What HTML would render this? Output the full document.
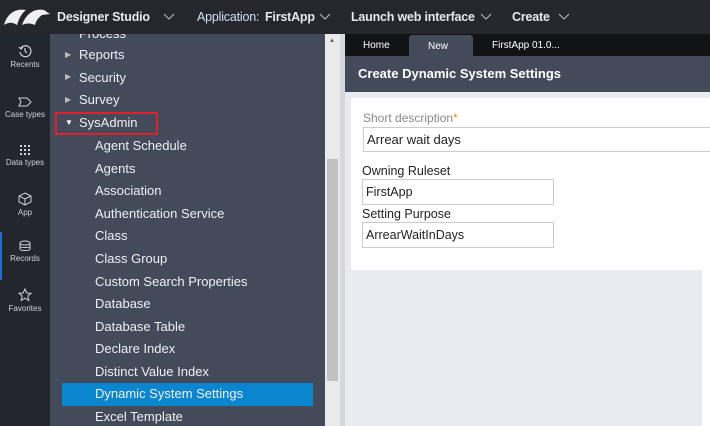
<!DOCTYPE html>
<html><head><style>
*{margin:0;padding:0;box-sizing:border-box}
body{width:710px;height:426px;overflow:hidden;font-family:"Liberation Sans",sans-serif;background:#fff;position:relative}
.top{position:absolute;left:0;top:0;width:710px;height:34px;background:#25272d;color:#e6e8ec;font-size:12.5px;letter-spacing:-0.2px}
.top span{position:absolute;top:10px;font-weight:bold;white-space:nowrap}
.rail{position:absolute;left:0;top:34px;width:50px;height:392px;background:#23262c;color:#cfd3da;font-size:8px;text-align:center}
.rail div{position:absolute;left:0;width:50px}
.rail svg{display:block;margin:0 auto 2px}
.tree{position:absolute;left:50px;top:34px;width:275px;height:392px;background:#434b5a;color:#eef0f3;font-size:13px;overflow:hidden}
.tree div{position:absolute;white-space:nowrap}
.sb{position:absolute;left:325px;top:34px;width:15px;height:392px;background:#eaeaea}
.thumb{position:absolute;left:327px;top:159px;width:11px;height:222px;background:#c1c1c1}
.right{position:absolute;left:340px;top:34px;width:370px;height:392px;background:#e8ebef}
</style></head><body>
<div class="top">
<svg style="position:absolute;left:3px;top:5px" width="48" height="22" viewBox="0 0 48 22"><path d="M1 20 C4 9 12 3 23 5 C19 8 16 13 14 20 C10 17 5 17 1 20 Z M19 20 C23 9 31 3 41 5 L47 9 L39 10 C35 13 33 16 32 20 C28 18 23 18 19 20 Z" fill="#f0f0f0"/></svg>
<span style="left:57px">Designer Studio</span>
<svg style="position:absolute;left:163px;top:13px" width="12" height="8"><path d="M1 1 L6 6 L11 1" stroke="#bbb" fill="none"/></svg>
<span style="left:197px;font-weight:normal;color:#cfe0f5">Application:</span>
<span style="left:265px">FirstApp</span>
<svg style="position:absolute;left:319px;top:13px" width="12" height="8"><path d="M1 1 L6 6 L11 1" stroke="#bbb" fill="none"/></svg>
<span style="left:351px">Launch web interface</span>
<svg style="position:absolute;left:480px;top:13px" width="12" height="8"><path d="M1 1 L6 6 L11 1" stroke="#bbb" fill="none"/></svg>
<span style="left:512px">Create</span>
<svg style="position:absolute;left:558px;top:13px" width="12" height="8"><path d="M1 1 L6 6 L11 1" stroke="#bbb" fill="none"/></svg>
</div>
<div class="rail">
<div style="top:10px"><svg width="14" height="14" viewBox="0 0 14 14"><path d="M3 4 A5.5 5.5 0 1 1 2 8 M1 3 L3 5 L5 3 M7 4 V7 L9 9" stroke="#cfd3da" fill="none" stroke-width="1.2"/></svg>Recents</div>
<div style="top:62px"><svg width="14" height="12" viewBox="0 0 14 12"><path d="M1 2 H9 L13 6 L9 10 H1 L3 6 Z" stroke="#cfd3da" fill="none"/></svg>Case types</div>
<div style="top:110px"><svg width="12" height="12" viewBox="0 0 12 12" fill="#cfd3da"><rect x="1" y="1" width="2" height="2"/><rect x="5" y="1" width="2" height="2"/><rect x="9" y="1" width="2" height="2"/><rect x="1" y="5" width="2" height="2"/><rect x="5" y="5" width="2" height="2"/><rect x="9" y="5" width="2" height="2"/><rect x="1" y="9" width="2" height="2"/><rect x="5" y="9" width="2" height="2"/><rect x="9" y="9" width="2" height="2"/></svg>Data types</div>
<div style="top:158px"><svg width="14" height="14" viewBox="0 0 14 14"><path d="M7 1 L13 4 V10 L7 13 L1 10 V4 Z M1 4 L7 7 L13 4 M7 7 V13" stroke="#cfd3da" fill="none"/></svg>App</div>
<div style="top:198px;left:0;width:2px;height:48px;background:#1f6fd6"></div>
<div style="top:206px"><svg width="14" height="12" viewBox="0 0 14 12"><ellipse cx="7" cy="3" rx="5" ry="2" stroke="#cfd3da" fill="none"/><path d="M2 3 V9 C2 11 12 11 12 9 V3 M2 6 C2 8 12 8 12 6" stroke="#cfd3da" fill="none"/></svg>Records</div>
<div style="top:254px"><svg width="14" height="14" viewBox="0 0 14 14"><path d="M7 1 L8.8 5 L13 5.3 L9.8 8 L10.8 12.5 L7 10.2 L3.2 12.5 L4.2 8 L1 5.3 L5.2 5 Z" stroke="#cfd3da" fill="none"/></svg>Favorites</div>
</div>
<div class="tree">
<div style="left:15px;top:-11px;font-size:8px;color:#bbb">▶</div><div style="left:29px;top:-8px">Process</div>
<div style="left:15px;top:16px;font-size:8px;color:#bbb">▶</div><div style="left:29px;top:13px">Reports</div>
<div style="left:15px;top:38px;font-size:8px;color:#bbb">▶</div><div style="left:29px;top:36px">Security</div>
<div style="left:15px;top:61px;font-size:8px;color:#bbb">▶</div><div style="left:29px;top:58px">Survey</div>
<div style="left:5px;top:78px;width:103px;height:23px;border:2px solid #e0202a"></div>
<div style="left:15px;top:84px;font-size:8px;color:#fff">▼</div><div style="left:29px;top:81px">SysAdmin</div>
<div style="left:12px;top:349px;width:251px;height:23px;background:#0a86cf"></div>
<div style="left:45px;top:104px">Agent Schedule</div>
<div style="left:45px;top:127px">Agents</div>
<div style="left:45px;top:149px">Association</div>
<div style="left:45px;top:172px">Authentication Service</div>
<div style="left:45px;top:194px">Class</div>
<div style="left:45px;top:217px">Class Group</div>
<div style="left:45px;top:240px">Custom Search Properties</div>
<div style="left:45px;top:262px">Database</div>
<div style="left:45px;top:285px">Database Table</div>
<div style="left:45px;top:307px">Declare Index</div>
<div style="left:45px;top:330px">Distinct Value Index</div>
<div style="left:45px;top:352px">Dynamic System Settings</div>
<div style="left:45px;top:375px">Excel Template</div>
</div>
<div class="sb"><div style="position:absolute;left:4px;top:4px;font-size:6px;color:#555">▲</div></div>
<div class="thumb"></div>
<div class="right">
<div style="position:absolute;left:0;top:0;width:5px;height:392px;background:#d6d8db"></div>
<div style="position:absolute;left:5px;top:0;width:365px;height:22px;background:#121315"></div>
<div style="position:absolute;left:69px;top:1px;width:64px;height:21px;background:#434b5a;border-radius:3px 3px 0 0"></div>
<div style="position:absolute;left:23px;top:6px;font-size:10px;color:#fff">Home</div>
<div style="position:absolute;left:88px;top:7px;font-size:10px;color:#fff">New</div>
<div style="position:absolute;left:152px;top:6px;font-size:10px;color:#fff">FirstApp 01.0...</div>
<div style="position:absolute;left:5px;top:22px;width:365px;height:36px;background:#434b5a;color:#fff;font-weight:bold;font-size:13px;padding:10px 0 0 13px">Create Dynamic System Settings</div>
<div style="position:absolute;left:11px;top:64px;width:359px;height:172px;background:#fff"></div>
<div style="position:absolute;left:23px;top:77px;font-size:12px;color:#888">Short description<span style="color:#f08a1a">*</span></div>
<div style="position:absolute;left:23px;top:93px;width:350px;height:25px;border:1px solid #ccc;font-size:13px;color:#222;padding:4px 3px">Arrear wait days</div>
<div style="position:absolute;left:22px;top:130px;font-size:12.5px;color:#222">Owning Ruleset</div>
<div style="position:absolute;left:22px;top:145px;width:192px;height:26px;border:1px solid #ccc;font-size:12.5px;color:#222;padding:5px 3px">FirstApp</div>
<div style="position:absolute;left:22px;top:173px;font-size:12.5px;color:#222">Setting Purpose</div>
<div style="position:absolute;left:22px;top:188px;width:192px;height:26px;border:1px solid #ccc;font-size:12.5px;color:#222;padding:5px 3px">ArrearWaitInDays</div>
<div style="position:absolute;left:362px;top:236px;width:8px;height:156px;background:#fff"></div>
</div>
</body></html>
